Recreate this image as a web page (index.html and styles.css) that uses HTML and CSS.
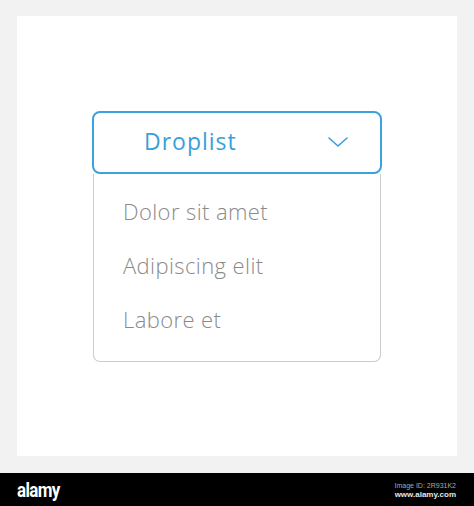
FILE: index.html
```html
<!DOCTYPE html>
<html lang="en">
<head>
<meta charset="utf-8">
<title>Droplist</title>
<link rel="stylesheet" href="styles.css">
</head>
<body>
<div class="stage">
  <div class="card">
    <div class="droplist">
      <div class="droplist-head">
        <span class="droplist-title">Droplist</span>
        <svg class="chevron" width="20" height="10" viewBox="0 0 20 10" aria-hidden="true">
          <path d="M1 1 L10 9 L19 1" fill="none" stroke="#3a9fd8" stroke-width="1.6" stroke-linecap="round" stroke-linejoin="round"/>
        </svg>
      </div>
      <ul class="droplist-menu">
        <li class="droplist-item">Dolor sit amet</li>
        <li class="droplist-item">Adipiscing elit</li>
        <li class="droplist-item">Labore et</li>
      </ul>
    </div>
  </div>
</div>
<footer class="footer">
  <span class="brand">alamy</span>
  <div class="meta">
    <span class="meta-id">Image ID: 2R931K2</span>
    <span class="meta-url">www.alamy.com</span>
  </div>
</footer>
</body>
</html>
```
FILE: styles.css
```css
* { box-sizing: border-box; }

html, body {
  margin: 0;
  padding: 0;
}

body {
  width: 474px;
  height: 506px;
  background: #f2f2f2;
  font-family: "Open Sans", "Noto Sans", sans-serif;
  overflow: hidden;
}

.stage {
  height: 473px;
  padding: 16px 17px 17px 17px;
}

.card {
  width: 440px;
  height: 440px;
  background: #ffffff;
  display: flex;
  align-items: center;
  justify-content: center;
}

.droplist {
  width: 290px;
  display: flex;
  flex-direction: column;
}

.droplist-head {
  height: 63px;
  border: 2px solid #3ba2dc;
  border-radius: 8px;
  display: flex;
  align-items: center;
  justify-content: space-between;
  padding: 0 32px 0 50px;
}

.droplist-title {
  font-size: 23px;
  font-weight: 400;
  color: #3a9fd8;
  letter-spacing: 1px;
  line-height: 1;
  margin-top: -2px;
}

.chevron {
  display: block;
}

.droplist-menu {
  list-style: none;
  margin: 0 1px;
  padding: 10px 0 15px 0;
  border: 1.5px solid #cbcbcb;
  border-top: none;
  border-radius: 0 0 7px 7px;
}

.droplist-item {
  height: 54px;
  line-height: 54px;
  padding-left: 29px;
  font-size: 22px;
  font-weight: 300;
  letter-spacing: 0.4px;
  color: #8a8a8a;
}

.footer {
  height: 33px;
  background: #000000;
  display: flex;
  align-items: center;
  justify-content: space-between;
  padding: 0 18px 0 17px;
}

.brand {
  font-family: "Roboto", sans-serif;
  font-weight: 700;
  font-size: 20px;
  letter-spacing: -0.8px;
  color: #ffffff;
  transform: scaleX(0.85);
  transform-origin: left center;
}

.meta {
  display: flex;
  flex-direction: column;
  align-items: flex-end;
  line-height: 9px;
}

.meta-id {
  font-family: "Liberation Sans", sans-serif;
  font-size: 7px;
  color: #a8a8a8;
}

.meta-url {
  font-family: "Liberation Sans", sans-serif;
  font-size: 8px;
  font-weight: 700;
  color: #e6e6e6;
}
```
